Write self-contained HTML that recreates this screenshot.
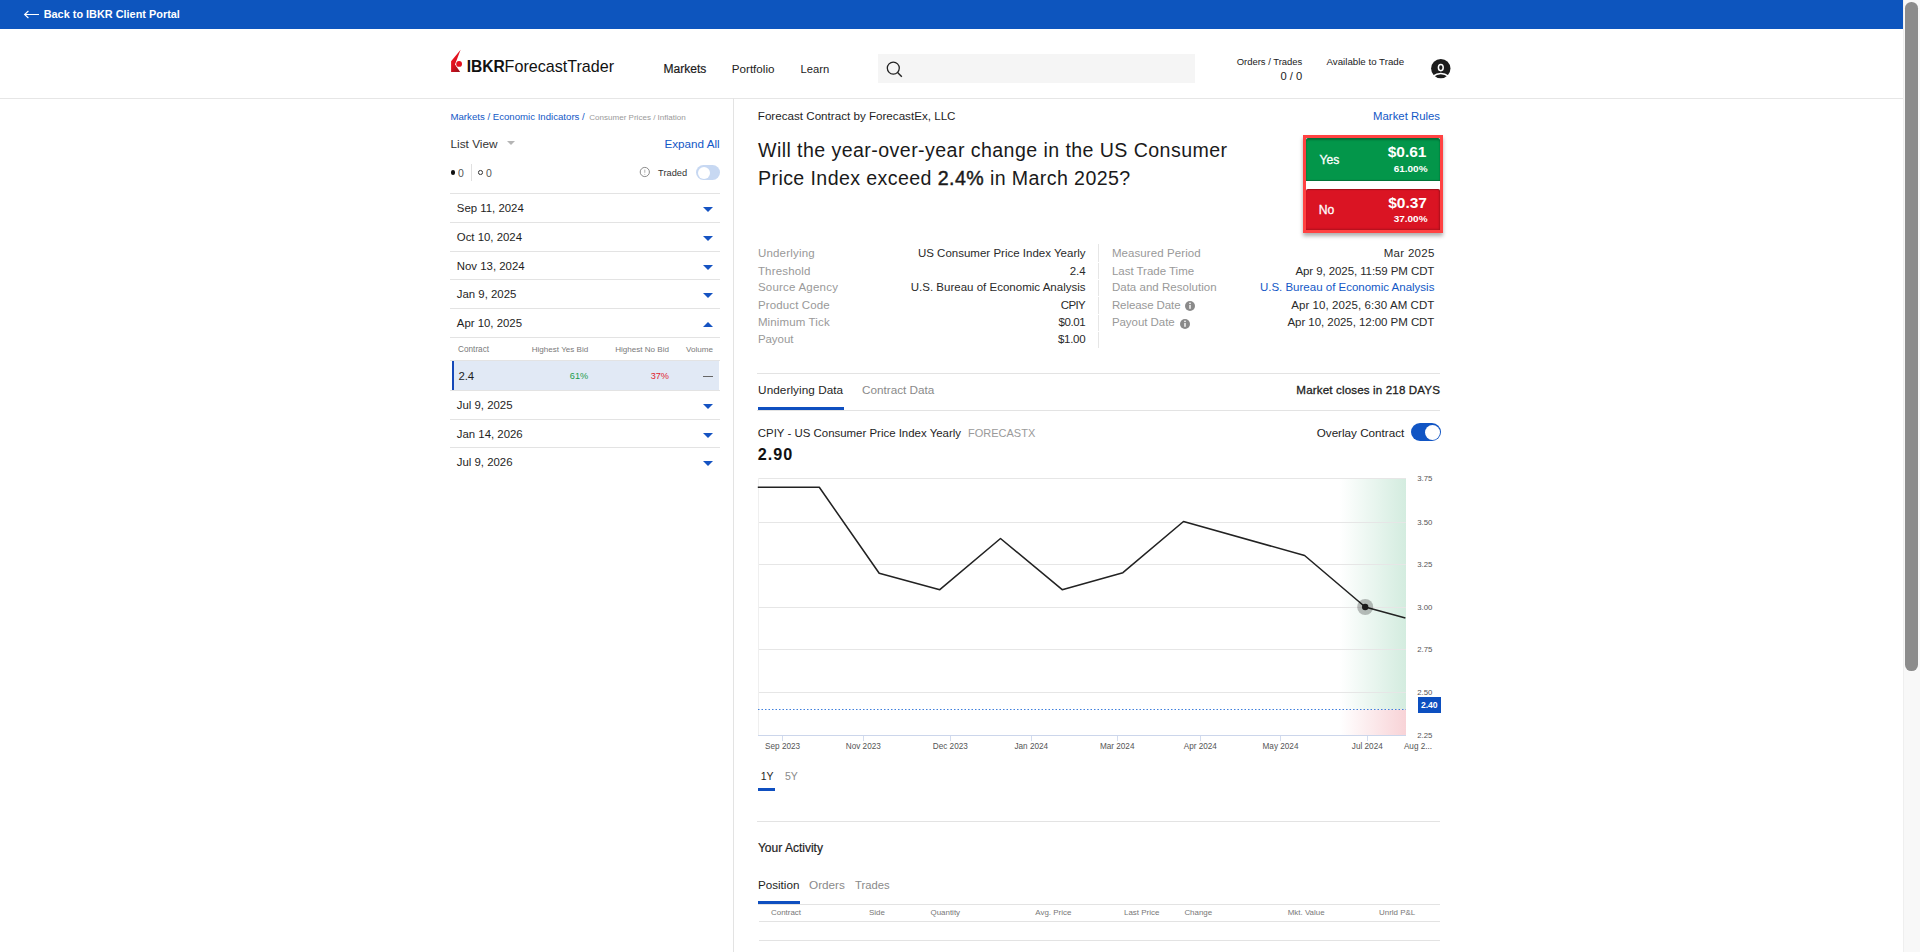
<!DOCTYPE html>
<html><head><meta charset="utf-8"><title>IBKR ForecastTrader</title>
<style>
html,body{margin:0;padding:0;width:1920px;height:952px;overflow:hidden;background:#fff;}
body{position:relative;font-family:"Liberation Sans", sans-serif;}
.t{position:absolute;white-space:nowrap;line-height:20px;}
.r{position:absolute;}
</style></head><body>
<div class="r" style="left:0px;top:0px;width:1903px;height:29px;background:#0d55be;"></div>
<svg class="r" style="left:23px;top:8px" width="17" height="12" viewBox="0 0 17 12"><path d="M1.6 6.5H16M5.4 3.0L1.6 6.5L5.4 10.0" fill="none" stroke="#fff" stroke-width="1.1"/></svg>
<div class="t" style="top:4.02px;font-size:10.9px;color:#fff;font-weight:bold;left:43.7px;">Back to IBKR Client Portal</div>
<div class="r" style="left:0px;top:98px;width:1903px;height:1px;background:#e6e6e6;"></div>
<svg class="r" style="left:450px;top:49px" width="14" height="24" viewBox="0 0 14 24"><defs><linearGradient id="lg" x1="0" y1="0" x2="0.6" y2="1"><stop offset="0" stop-color="#ee1c25"/><stop offset="0.6" stop-color="#e0101e"/><stop offset="1" stop-color="#a5121c"/></linearGradient></defs><path d="M10.6 0.8 L1.1 12.2 L1.1 22.9 L10.2 22.9 L5.0 15.6 Z" fill="url(#lg)"/><circle cx="9.1" cy="14.9" r="3.3" fill="#fff"/><circle cx="9.1" cy="14.9" r="2.9" fill="#e3101e"/></svg>
<div class="t" style="top:56.89px;font-size:15.6px;color:#111;font-weight:bold;left:466.8px;letter-spacing:-0.077px;">IBKR</div>
<div class="t" style="top:56.22px;font-size:16.1px;color:#111;left:504.6px;">ForecastTrader</div>
<div class="t" style="top:58.53px;font-size:12.04px;color:#1a1a1a;left:663.5px;-webkit-text-stroke:0.2px currentColor;">Markets</div>
<div class="t" style="top:58.66px;font-size:11.64px;color:#222;left:731.8px;">Portfolio</div>
<div class="t" style="top:58.81px;font-size:11.22px;color:#222;left:800.5px;">Learn</div>
<div class="r" style="left:878px;top:54px;width:317px;height:29px;background:#f5f5f5;"></div>
<svg class="r" style="left:884px;top:59px" width="22" height="22" viewBox="0 0 22 22"><circle cx="9.3" cy="9.1" r="6.0" fill="none" stroke="#222" stroke-width="1.3"/><path d="M13.6 13.4 L17.8 17.7" stroke="#222" stroke-width="1.4"/></svg>
<div class="t" style="top:51.62px;font-size:9.46px;color:#222;left:702.3px;width:600px;text-align:right;">Orders / Trades</div>
<div class="t" style="top:65.82px;font-size:11.2px;color:#222;left:702.3px;width:600px;text-align:right;">0 / 0</div>
<div class="t" style="top:51.53px;font-size:9.72px;color:#222;left:1326.5px;">Available to Trade</div>
<svg class="r" style="left:1430px;top:58px" width="22" height="22" viewBox="0 0 22 22"><circle cx="10.8" cy="10.6" r="9.7" fill="#1c1c1c"/><ellipse cx="10.8" cy="9.6" rx="2.4" ry="3.1" fill="none" stroke="#fff" stroke-width="1.5"/><path d="M2.8 18.4 Q10.8 12.6 18.8 18.4" fill="none" stroke="#fff" stroke-width="1.7"/></svg>
<div class="t" style="top:107.16px;font-size:9.63px;color:#1358c6;left:450.5px;">Markets / Economic Indicators /</div>
<div class="t" style="top:108.41px;font-size:8.05px;color:#9a9a9a;left:589.2px;">Consumer Prices / Inflation</div>
<div class="t" style="top:133.81px;font-size:11.8px;color:#333;left:450.5px;">List View</div>
<svg class="r" style="left:506px;top:140px" width="10" height="6" viewBox="0 0 10 6"><path d="M1 1 H9 L5 5 Z" fill="#b5b5b5"/></svg>
<div class="t" style="top:133.85px;font-size:11.69px;color:#1358c6;left:664.4px;">Expand All</div>
<div class="r" style="left:451px;top:170.3px;width:4.3px;height:4.3px;border-radius:50%;background:#111"></div>
<div class="t" style="top:162.76px;font-size:10.5px;color:#555;left:458px;letter-spacing:1.160px;">0</div>
<div class="r" style="left:471px;top:164px;width:1px;height:17px;background:#e0e0e0;"></div>
<div class="r" style="left:478.3px;top:170.3px;width:2.6px;height:2.6px;border-radius:50%;border:1px solid #333"></div>
<div class="t" style="top:162.76px;font-size:10.5px;color:#555;left:486px;">0</div>
<svg class="r" style="left:639px;top:166px" width="12" height="12" viewBox="0 0 12 12"><circle cx="5.8" cy="6" r="4.6" fill="none" stroke="#8c8c8c" stroke-width="1"/><path d="M5.8 3.6 V6.8" stroke="#b0b0b0" stroke-width="1"/><circle cx="5.8" cy="8.3" r="0.55" fill="#b0b0b0"/></svg>
<div class="t" style="top:162.79px;font-size:9.26px;color:#333;left:658.1px;">Traded</div>
<div class="r" style="left:696px;top:165px;width:24px;height:15px;border-radius:8px;background:#c7d8f2"></div>
<div class="r" style="left:697.5px;top:166.5px;width:12px;height:12px;border-radius:50%;background:#fff"></div>
<div class="r" style="left:450px;top:193px;width:270px;height:1px;background:#e3e3e3;"></div>
<div class="t" style="top:198.15px;font-size:11.4px;color:#1e1e1e;left:456.8px;">Sep 11, 2024</div>
<svg class="r" style="left:702px;top:206px" width="12" height="7" viewBox="0 0 12 7"><path d="M1 1 H11 L6 6 Z" fill="#1553c2"/></svg>
<div class="r" style="left:450px;top:222px;width:270px;height:1px;background:#e3e3e3;"></div>
<div class="t" style="top:227.15px;font-size:11.4px;color:#1e1e1e;left:456.8px;">Oct 10, 2024</div>
<svg class="r" style="left:702px;top:235px" width="12" height="7" viewBox="0 0 12 7"><path d="M1 1 H11 L6 6 Z" fill="#1553c2"/></svg>
<div class="r" style="left:450px;top:251px;width:270px;height:1px;background:#e3e3e3;"></div>
<div class="t" style="top:256.15px;font-size:11.4px;color:#1e1e1e;left:456.8px;">Nov 13, 2024</div>
<svg class="r" style="left:702px;top:264px" width="12" height="7" viewBox="0 0 12 7"><path d="M1 1 H11 L6 6 Z" fill="#1553c2"/></svg>
<div class="r" style="left:450px;top:279px;width:270px;height:1px;background:#e3e3e3;"></div>
<div class="t" style="top:284.15px;font-size:11.4px;color:#1e1e1e;left:456.8px;">Jan 9, 2025</div>
<svg class="r" style="left:702px;top:292px" width="12" height="7" viewBox="0 0 12 7"><path d="M1 1 H11 L6 6 Z" fill="#1553c2"/></svg>
<div class="r" style="left:450px;top:308px;width:270px;height:1px;background:#e3e3e3;"></div>
<div class="t" style="top:313.15px;font-size:11.4px;color:#1e1e1e;left:456.8px;">Apr 10, 2025</div>
<svg class="r" style="left:702px;top:321px" width="12" height="7" viewBox="0 0 12 7"><path d="M1 6 H11 L6 1 Z" fill="#1553c2"/></svg>
<div class="r" style="left:450px;top:337px;width:270px;height:1px;background:#e3e3e3;"></div>
<div class="t" style="top:340.16px;font-size:8.2px;color:#7a7a7a;left:458.1px;">Contract</div>
<div class="t" style="top:340.20px;font-size:8.07px;color:#7a7a7a;left:-11.799999999999955px;width:600px;text-align:right;">Highest Yes Bid</div>
<div class="t" style="top:340.20px;font-size:8.07px;color:#7a7a7a;left:69px;width:600px;text-align:right;">Highest No Bid</div>
<div class="t" style="top:340.19px;font-size:8.1px;color:#7a7a7a;left:113.10000000000002px;width:600px;text-align:right;">Volume</div>
<div class="r" style="left:450px;top:360px;width:270px;height:1px;background:#e3e3e3;"></div>
<div class="r" style="left:452px;top:361px;width:267px;height:29px;background:#e1e9f5;"></div>
<div class="r" style="left:452px;top:361px;width:2px;height:29px;background:#1448b8;"></div>
<div class="t" style="top:365.86px;font-size:11.37px;color:#1e1e1e;left:458.4px;">2.4</div>
<div class="t" style="top:365.81px;font-size:9.19px;color:#1a9b4b;left:-11.799999999999955px;width:600px;text-align:right;">61%</div>
<div class="t" style="top:365.81px;font-size:9.19px;color:#e01b2d;left:69px;width:600px;text-align:right;">37%</div>
<div class="r" style="left:703px;top:376px;width:10px;height:1px;background:#666;"></div>
<div class="r" style="left:450px;top:390px;width:270px;height:1px;background:#e3e3e3;"></div>
<div class="t" style="top:395.15px;font-size:11.4px;color:#1e1e1e;left:456.8px;">Jul 9, 2025</div>
<svg class="r" style="left:702px;top:403px" width="12" height="7" viewBox="0 0 12 7"><path d="M1 1 H11 L6 6 Z" fill="#1553c2"/></svg>
<div class="r" style="left:450px;top:419px;width:270px;height:1px;background:#e3e3e3;"></div>
<div class="t" style="top:424.15px;font-size:11.4px;color:#1e1e1e;left:456.8px;">Jan 14, 2026</div>
<svg class="r" style="left:702px;top:432px" width="12" height="7" viewBox="0 0 12 7"><path d="M1 1 H11 L6 6 Z" fill="#1553c2"/></svg>
<div class="r" style="left:450px;top:447px;width:270px;height:1px;background:#e3e3e3;"></div>
<div class="t" style="top:452.15px;font-size:11.4px;color:#1e1e1e;left:456.8px;">Jul 9, 2026</div>
<svg class="r" style="left:702px;top:460px" width="12" height="7" viewBox="0 0 12 7"><path d="M1 1 H11 L6 6 Z" fill="#1553c2"/></svg>
<div class="r" style="left:733px;top:98px;width:1px;height:854px;background:#e3e3e3;"></div>
<div class="t" style="top:105.86px;font-size:11.64px;color:#1e1e1e;left:757.8px;">Forecast Contract by ForecastEx, LLC</div>
<div class="t" style="top:105.96px;font-size:11.36px;color:#1358c6;left:840px;width:600px;text-align:right;">Market Rules</div>
<div class="t" style="top:140.00px;font-size:19.6px;color:#1a1a1a;left:758px;letter-spacing:0.425px;">Will the year-over-year change in the US Consumer</div>
<div class="t" style="top:167.80px;font-size:19.6px;color:#1a1a1a;left:758px;letter-spacing:0.403px;">Price Index exceed <span style="-webkit-text-stroke:0.45px currentColor">2.4%</span> in March 2025?</div>
<div class="r" style="left:1303px;top:135px;width:134px;height:92px;border:3px solid #ff4242;box-shadow:0 3px 4px rgba(0,0,0,0.32)"></div>
<div class="r" style="left:1306px;top:138px;width:134px;height:43px;background:#03964a;border-radius:2px 2px 0 0;box-shadow:inset 0 2px 2px rgba(0,0,0,0.28), inset 0 -1px 1px rgba(0,0,0,0.25);"></div>
<div class="r" style="left:1306px;top:181px;width:134px;height:8px;background:#ffffff;"></div>
<div class="r" style="left:1306px;top:189px;width:134px;height:41px;background:#da1423;border-radius:2px 2px 0 0;box-shadow:inset 0 1px 1px rgba(0,0,0,0.25), inset -1px -1px 2px rgba(0,0,0,0.2);"></div>
<div class="t" style="top:149.77px;font-size:12.2px;color:#fff;left:1319.4px;-webkit-text-stroke:0.3px currentColor;">Yes</div>
<div class="t" style="top:141.63px;font-size:15.5px;color:#fff;font-weight:bold;left:826.5px;width:600px;text-align:right;">$0.61</div>
<div class="t" style="top:158.54px;font-size:9.97px;color:#fff;font-weight:bold;left:827.5px;width:600px;text-align:right;">61.00%</div>
<div class="t" style="top:200.47px;font-size:12.2px;color:#fff;left:1318.7px;-webkit-text-stroke:0.3px currentColor;">No</div>
<div class="t" style="top:193.13px;font-size:15.5px;color:#fff;font-weight:bold;left:827px;width:600px;text-align:right;">$0.37</div>
<div class="t" style="top:209.34px;font-size:9.97px;color:#fff;font-weight:bold;left:827.5px;width:600px;text-align:right;">37.00%</div>
<div class="t" style="top:243.11px;font-size:11.5px;color:#999;left:757.9px;letter-spacing:0.203px;">Underlying</div>
<div class="t" style="top:243.11px;font-size:11.5px;color:#2a2a2a;left:485.6077882543102px;width:600px;text-align:right;letter-spacing:0.008px;">US Consumer Price Index Yearly</div>
<div class="t" style="top:260.61px;font-size:11.5px;color:#999;left:757.9px;letter-spacing:0.170px;">Threshold</div>
<div class="t" style="top:260.61px;font-size:11.5px;color:#2a2a2a;left:485.5066015625px;width:600px;text-align:right;letter-spacing:-0.093px;">2.4</div>
<div class="t" style="top:277.41px;font-size:11.5px;color:#999;left:757.9px;letter-spacing:0.220px;">Source Agency</div>
<div class="t" style="top:277.41px;font-size:11.5px;color:#2a2a2a;left:485.6127898185482px;width:600px;text-align:right;letter-spacing:0.013px;">U.S. Bureau of Economic Analysis</div>
<div class="t" style="top:294.71px;font-size:11.5px;color:#999;left:757.9px;letter-spacing:0.134px;">Product Code</div>
<div class="t" style="top:294.71px;font-size:11.5px;color:#2a2a2a;left:484.9194270833332px;width:600px;text-align:right;letter-spacing:-0.681px;">CPIY</div>
<div class="t" style="top:311.51px;font-size:11.5px;color:#999;left:757.9px;letter-spacing:0.138px;">Minimum Tick</div>
<div class="t" style="top:311.51px;font-size:11.5px;color:#2a2a2a;left:485.2053125px;width:600px;text-align:right;letter-spacing:-0.395px;">$0.01</div>
<div class="t" style="top:329.31px;font-size:11.5px;color:#999;left:757.9px;letter-spacing:-0.041px;">Payout</div>
<div class="t" style="top:329.31px;font-size:11.5px;color:#2a2a2a;left:485.3053124999999px;width:600px;text-align:right;letter-spacing:-0.295px;">$1.00</div>
<div class="r" style="left:1098px;top:244px;width:1px;height:18px;background:#e6e6e6;"></div>
<div class="r" style="left:1098px;top:263px;width:1px;height:16px;background:#e6e6e6;"></div>
<div class="r" style="left:1098px;top:280px;width:1px;height:16px;background:#e6e6e6;"></div>
<div class="r" style="left:1098px;top:297px;width:1px;height:17px;background:#e6e6e6;"></div>
<div class="r" style="left:1098px;top:315px;width:1px;height:16px;background:#e6e6e6;"></div>
<div class="r" style="left:1098px;top:332px;width:1px;height:16px;background:#e6e6e6;"></div>
<div class="t" style="top:243.11px;font-size:11.5px;color:#999;left:1111.9px;letter-spacing:0.087px;">Measured Period</div>
<div class="t" style="top:243.11px;font-size:11.5px;color:#2a2a2a;left:834.7021707589286px;width:600px;text-align:right;letter-spacing:0.302px;">Mar 2025</div>
<div class="t" style="top:260.61px;font-size:11.5px;color:#999;left:1111.9px;letter-spacing:-0.018px;">Last Trade Time</div>
<div class="t" style="top:260.61px;font-size:11.5px;color:#2a2a2a;left:834.3103336588542px;width:600px;text-align:right;letter-spacing:-0.090px;">Apr 9, 2025, 11:59 PM CDT</div>
<div class="t" style="top:277.41px;font-size:11.5px;color:#999;left:1111.9px;letter-spacing:0.027px;">Data and Resolution</div>
<div class="t" style="top:277.41px;font-size:11.5px;color:#1358c6;left:834.399886592742px;width:600px;text-align:right;letter-spacing:-0.000px;">U.S. Bureau of Economic Analysis</div>
<div class="t" style="top:294.71px;font-size:11.5px;color:#999;left:1111.9px;letter-spacing:-0.089px;">Release Date</div>
<div class="t" style="top:294.71px;font-size:11.5px;color:#2a2a2a;left:834.4803662109375px;width:600px;text-align:right;letter-spacing:0.080px;">Apr 10, 2025, 6:30 AM CDT</div>
<div class="t" style="top:311.51px;font-size:11.5px;color:#999;left:1111.9px;letter-spacing:-0.049px;">Payout Date</div>
<div class="t" style="top:311.51px;font-size:11.5px;color:#2a2a2a;left:834.3439406250002px;width:600px;text-align:right;letter-spacing:-0.056px;">Apr 10, 2025, 12:00 PM CDT</div>
<svg class="r" style="left:1184px;top:300.3px" width="12" height="12" viewBox="0 0 12 12"><circle cx="6" cy="6" r="5" fill="#8a8a8a"/><rect x="5.3" y="5" width="1.4" height="3.8" fill="#fff"/><circle cx="6" cy="3.4" r="0.8" fill="#fff"/></svg>
<svg class="r" style="left:1179px;top:318.1px" width="12" height="12" viewBox="0 0 12 12"><circle cx="6" cy="6" r="5" fill="#8a8a8a"/><rect x="5.3" y="5" width="1.4" height="3.8" fill="#fff"/><circle cx="6" cy="3.4" r="0.8" fill="#fff"/></svg>
<div class="r" style="left:757px;top:373px;width:683px;height:1px;background:#e3e3e3;"></div>
<div class="t" style="top:379.53px;font-size:11.74px;color:#1e1e1e;left:758.1px;letter-spacing:0.065px;">Underlying Data</div>
<div class="t" style="top:379.53px;font-size:11.74px;color:#8a8a8a;left:862px;">Contract Data</div>
<div class="t" style="top:379.98px;font-size:11.6px;color:#1e1e1e;left:840.1401484375001px;width:600px;text-align:right;-webkit-text-stroke:0.3px currentColor;letter-spacing:0.140px;">Market closes in 218 DAYS</div>
<div class="r" style="left:757px;top:410px;width:683px;height:1px;background:#e3e3e3;"></div>
<div class="r" style="left:758px;top:407px;width:86px;height:3px;background:#0f4fc0;"></div>
<div class="t" style="top:422.93px;font-size:11.45px;color:#1e1e1e;left:757.8px;">CPIY - US Consumer Price Index Yearly</div>
<div class="t" style="top:423.09px;font-size:11.0px;color:#9a9a9a;left:968px;">FORECASTX</div>
<div class="t" style="top:422.75px;font-size:11.68px;color:#222;left:804.3px;width:600px;text-align:right;">Overlay Contract</div>
<div class="r" style="left:1411px;top:423px;width:30px;height:18px;border-radius:9px;background:#1155c4"></div>
<div class="r" style="left:1424.8px;top:424.8px;width:15px;height:15px;border-radius:50%;background:#fff"></div>
<div class="t" style="top:444.18px;font-size:16.2px;color:#111;font-weight:bold;left:757.8px;letter-spacing:0.956px;">2.90</div>
<svg class="r" style="left:0;top:0" width="1903" height="952" viewBox="0 0 1903 952"><defs><linearGradient id="gg" x1="0" x2="1" y1="0" y2="0"><stop offset="0" stop-color="#d3ecdf" stop-opacity="0"/><stop offset="1" stop-color="#d3ecdf" stop-opacity="1"/></linearGradient><linearGradient id="rg" x1="0" x2="1" y1="0" y2="0"><stop offset="0" stop-color="#f8d3d7" stop-opacity="0"/><stop offset="1" stop-color="#f8d3d7" stop-opacity="1"/></linearGradient></defs><rect x="1340" y="478.5" width="66" height="231" fill="url(#gg)"/><rect x="1340" y="709.5" width="66" height="25.5" fill="url(#rg)"/><rect x="758" y="478" width="648" height="1" fill="#e6e6e6"/><rect x="758" y="522" width="648" height="1" fill="#e6e6e6"/><rect x="758" y="564" width="648" height="1" fill="#e6e6e6"/><rect x="758" y="607" width="648" height="1" fill="#e6e6e6"/><rect x="758" y="649" width="648" height="1" fill="#e6e6e6"/><rect x="758" y="692" width="648" height="1" fill="#e6e6e6"/><rect x="758" y="478" width="1" height="257" fill="#efefef"/><rect x="758" y="735" width="648" height="1" fill="#ccd6eb"/><line x1="758" x2="1406" y1="709.5" y2="709.5" stroke="#3f7fdc" stroke-width="1" stroke-dasharray="1.5 2"/><polyline fill="none" stroke="#222" stroke-width="1.55" stroke-linejoin="round" points="757.8,487.3 819.3,487.3 879.2,573.2 939.8,589.7 1000.5,538.5 1062.2,589.7 1122.9,572.7 1183.5,521.5 1304.6,555.5 1365.2,607 1405.4,618.1"/><circle cx="1365.2" cy="607" r="8" fill="#000" fill-opacity="0.25"/><circle cx="1365.2" cy="607" r="3.2" fill="#1a1a1a"/><rect x="782" y="736" width="1" height="5" fill="#d3dcef"/><rect x="863" y="736" width="1" height="5" fill="#d3dcef"/><rect x="950" y="736" width="1" height="5" fill="#d3dcef"/><rect x="1031" y="736" width="1" height="5" fill="#d3dcef"/><rect x="1117" y="736" width="1" height="5" fill="#d3dcef"/><rect x="1200" y="736" width="1" height="5" fill="#d3dcef"/><rect x="1280" y="736" width="1" height="5" fill="#d3dcef"/><rect x="1367" y="736" width="1" height="5" fill="#d3dcef"/></svg>
<div class="t" style="top:468.90px;font-size:7.8px;color:#555;left:1417.2px;">3.75</div>
<div class="t" style="top:512.90px;font-size:7.8px;color:#555;left:1417.2px;">3.50</div>
<div class="t" style="top:554.90px;font-size:7.8px;color:#555;left:1417.2px;">3.25</div>
<div class="t" style="top:597.90px;font-size:7.8px;color:#555;left:1417.2px;">3.00</div>
<div class="t" style="top:639.90px;font-size:7.8px;color:#555;left:1417.2px;">2.75</div>
<div class="t" style="top:682.90px;font-size:7.8px;color:#555;left:1417.2px;">2.50</div>
<div class="t" style="top:725.90px;font-size:7.8px;color:#555;left:1417.2px;">2.25</div>
<div class="r" style="left:1417.7px;top:697.2px;width:23.3px;height:15.5px;background:#0c4fc0;"></div>
<div class="t" style="top:695.32px;font-size:8.6px;color:#fff;font-weight:bold;left:1129.3px;width:600px;text-align:center;">2.40</div>
<div class="t" style="top:736.76px;font-size:8.2px;color:#555;left:482.6px;width:600px;text-align:center;">Sep 2023</div>
<div class="t" style="top:736.76px;font-size:8.2px;color:#555;left:563.3px;width:600px;text-align:center;">Nov 2023</div>
<div class="t" style="top:736.76px;font-size:8.2px;color:#555;left:650.3px;width:600px;text-align:center;">Dec 2023</div>
<div class="t" style="top:736.76px;font-size:8.2px;color:#555;left:731.3px;width:600px;text-align:center;">Jan 2024</div>
<div class="t" style="top:736.76px;font-size:8.2px;color:#555;left:817.2px;width:600px;text-align:center;">Mar 2024</div>
<div class="t" style="top:736.76px;font-size:8.2px;color:#555;left:900.3px;width:600px;text-align:center;">Apr 2024</div>
<div class="t" style="top:736.76px;font-size:8.2px;color:#555;left:980.5px;width:600px;text-align:center;">May 2024</div>
<div class="t" style="top:736.76px;font-size:8.2px;color:#555;left:1067.3px;width:600px;text-align:center;">Jul 2024</div>
<div class="t" style="top:736.76px;font-size:8.2px;color:#555;left:1118px;width:600px;text-align:center;">Aug 2...</div>
<div class="t" style="top:766.26px;font-size:10.5px;color:#1e1e1e;left:760.7px;">1Y</div>
<div class="t" style="top:766.26px;font-size:10.5px;color:#8a8a8a;left:784.9px;">5Y</div>
<div class="r" style="left:758px;top:788px;width:17px;height:3px;background:#0f4fc0;"></div>
<div class="r" style="left:757px;top:821px;width:683px;height:1px;background:#e3e3e3;"></div>
<div class="t" style="top:838.23px;font-size:12.04px;color:#1e1e1e;left:757.9px;-webkit-text-stroke:0.2px currentColor;">Your Activity</div>
<div class="t" style="top:875.15px;font-size:11.67px;color:#1e1e1e;left:757.9px;">Position</div>
<div class="t" style="top:875.13px;font-size:11.75px;color:#8a8a8a;left:809px;">Orders</div>
<div class="t" style="top:875.30px;font-size:11.25px;color:#8a8a8a;left:855.1px;">Trades</div>
<div class="r" style="left:758px;top:904px;width:682px;height:1px;background:#e3e3e3;"></div>
<div class="r" style="left:758px;top:901px;width:42px;height:3px;background:#0f4fc0;"></div>
<div class="t" style="top:903.14px;font-size:7.95px;color:#777;left:771px;">Contract</div>
<div class="t" style="top:903.14px;font-size:7.95px;color:#777;left:869px;">Side</div>
<div class="t" style="top:903.14px;font-size:7.95px;color:#777;left:930.5px;">Quantity</div>
<div class="t" style="top:903.14px;font-size:7.95px;color:#777;left:1035.3px;">Avg. Price</div>
<div class="t" style="top:903.14px;font-size:7.95px;color:#777;left:1124px;">Last Price</div>
<div class="t" style="top:903.14px;font-size:7.95px;color:#777;left:1184.4px;">Change</div>
<div class="t" style="top:903.14px;font-size:7.95px;color:#777;left:1287.7px;">Mkt. Value</div>
<div class="t" style="top:903.14px;font-size:7.95px;color:#777;left:1379px;">Unrld P&amp;L</div>
<div class="r" style="left:759px;top:921px;width:681px;height:1px;background:#e3e3e3;"></div>
<div class="r" style="left:759px;top:940px;width:681px;height:1px;background:#e3e3e3;"></div>
<div class="r" style="left:1903px;top:0px;width:17px;height:952px;background:#f8f8f8;border-left:1px solid #efefef;box-sizing:border-box;"></div>
<div class="r" style="left:1905.2px;top:2px;width:12.6px;height:669px;background:#8c8c8c;border-radius:6.3px;"></div>
</body></html>
